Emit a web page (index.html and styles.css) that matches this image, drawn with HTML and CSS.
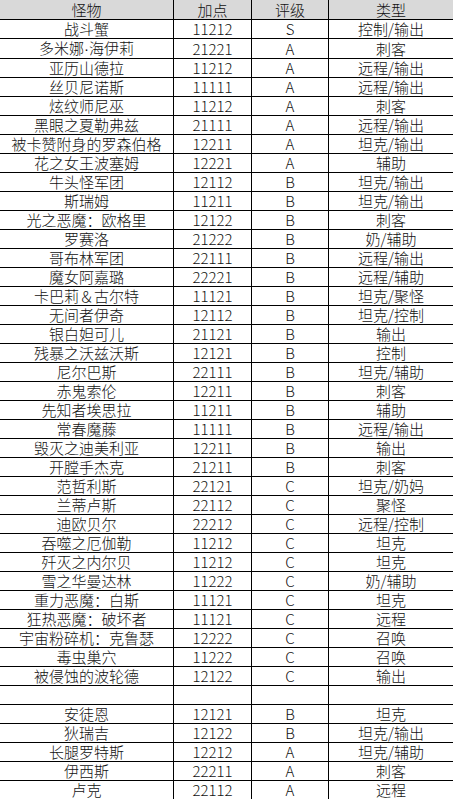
FILE: index.html
```html
<!DOCTYPE html>
<html lang="zh-CN">
<head>
<meta charset="utf-8">
<title>怪物评级</title>
<link rel="stylesheet" href="styles.css">
</head>
<body>
<table class="sheet">
<thead>
<tr><th class="c1">怪物</th><th class="c2">加点</th><th class="c3">评级</th><th class="c4">类型</th></tr>
</thead>
<tbody>
<tr><td>战斗蟹</td><td>11212</td><td>S</td><td>控制/输出</td></tr>
<tr><td>多米娜<span class="dot">·</span>海伊莉</td><td>21221</td><td>A</td><td>刺客</td></tr>
<tr><td>亚历山德拉</td><td>11212</td><td>A</td><td>远程/输出</td></tr>
<tr><td>丝贝尼诺斯</td><td>11111</td><td>A</td><td>远程/输出</td></tr>
<tr><td>炫纹师尼巫</td><td>11212</td><td>A</td><td>刺客</td></tr>
<tr><td>黑眼之夏勒弗兹</td><td>21111</td><td>A</td><td>远程/输出</td></tr>
<tr><td>被卡赞附身的罗森伯格</td><td>12211</td><td>A</td><td>坦克/输出</td></tr>
<tr><td>花之女王波塞姆</td><td>12221</td><td>A</td><td>辅助</td></tr>
<tr><td>牛头怪军团</td><td>12112</td><td>B</td><td>坦克/输出</td></tr>
<tr><td>斯瑞姆</td><td>11211</td><td>B</td><td>坦克/输出</td></tr>
<tr><td>光之恶魔：欧格里</td><td>12122</td><td>B</td><td>刺客</td></tr>
<tr><td>罗赛洛</td><td>21222</td><td>B</td><td>奶/辅助</td></tr>
<tr><td>哥布林军团</td><td>22111</td><td>B</td><td>远程/输出</td></tr>
<tr><td>魔女阿嘉璐</td><td>22221</td><td>B</td><td>远程/辅助</td></tr>
<tr><td>卡巴莉＆古尔特</td><td>11121</td><td>B</td><td>坦克/聚怪</td></tr>
<tr><td>无间者伊奇</td><td>12112</td><td>B</td><td>坦克/控制</td></tr>
<tr><td>银白妲可儿</td><td>21121</td><td>B</td><td>输出</td></tr>
<tr><td>残暴之沃兹沃斯</td><td>12121</td><td>B</td><td>控制</td></tr>
<tr><td>尼尔巴斯</td><td>22111</td><td>B</td><td>坦克/辅助</td></tr>
<tr><td>赤鬼索伦</td><td>12211</td><td>B</td><td>刺客</td></tr>
<tr><td>先知者埃思拉</td><td>11211</td><td>B</td><td>辅助</td></tr>
<tr><td>常春魔藤</td><td>11111</td><td>B</td><td>远程/输出</td></tr>
<tr><td>毁灭之迪美利亚</td><td>12211</td><td>B</td><td>输出</td></tr>
<tr><td>开膛手杰克</td><td>21211</td><td>B</td><td>刺客</td></tr>
<tr><td>范哲利斯</td><td>22121</td><td>C</td><td>坦克/奶妈</td></tr>
<tr><td>兰蒂卢斯</td><td>22112</td><td>C</td><td>聚怪</td></tr>
<tr><td>迪欧贝尔</td><td>22212</td><td>C</td><td>远程/控制</td></tr>
<tr><td>吞噬之厄伽勒</td><td>11212</td><td>C</td><td>坦克</td></tr>
<tr><td>歼灭之内尔贝</td><td>11212</td><td>C</td><td>坦克</td></tr>
<tr><td>雪之华曼达林</td><td>11222</td><td>C</td><td>奶/辅助</td></tr>
<tr><td>重力恶魔：白斯</td><td>11121</td><td>C</td><td>坦克</td></tr>
<tr><td>狂热恶魔：破坏者</td><td>11121</td><td>C</td><td>远程</td></tr>
<tr><td>宇宙粉碎机：克鲁瑟</td><td>12222</td><td>C</td><td>召唤</td></tr>
<tr><td>毒虫巢穴</td><td>11222</td><td>C</td><td>召唤</td></tr>
<tr><td>被侵蚀的波轮德</td><td>12122</td><td>C</td><td>输出</td></tr>
<tr class="gap"><td></td><td></td><td></td><td></td></tr>
<tr><td>安徒恩</td><td>12121</td><td>B</td><td>坦克</td></tr>
<tr><td>狄瑞吉</td><td>12122</td><td>B</td><td>坦克/输出</td></tr>
<tr><td>长腿罗特斯</td><td>12212</td><td>A</td><td>坦克/辅助</td></tr>
<tr><td>伊西斯</td><td>22211</td><td>A</td><td>刺客</td></tr>
<tr><td>卢克</td><td>22112</td><td>A</td><td>远程</td></tr>
</tbody>
</table>
</body>
</html>
```

FILE: styles.css
```css
html, body {
  margin: 0;
  padding: 0;
  background: #ffffff;
}

body {
  font-family: "Noto Sans CJK SC", "Noto Sans", sans-serif;
  color: #111111;
}

.sheet {
  border-collapse: separate;
  border-spacing: 0;
  table-layout: fixed;
  width: 453px;
}

.sheet th,
.sheet td {
  box-sizing: border-box;
  padding: 0;
  font-size: 15px;
  font-weight: 300;
  text-align: center;
  white-space: nowrap;
  border-right: 1px solid #000;
  border-bottom: 1px solid #000;
}

.sheet th:last-child,
.sheet td:last-child {
  border-right: none;
}

.sheet th {
  height: 20px;
  line-height: 19px;
  background: #d9d9d9;
}

.sheet td {
  height: 19px;
  line-height: 18px;
}

.dot {
  font-family: "Liberation Sans", sans-serif;
  font-weight: 400;
}

.c1 { width: 174px; }
.c2 { width: 78px; }
.c3 { width: 77px; }
.c4 { width: 124px; }
```
